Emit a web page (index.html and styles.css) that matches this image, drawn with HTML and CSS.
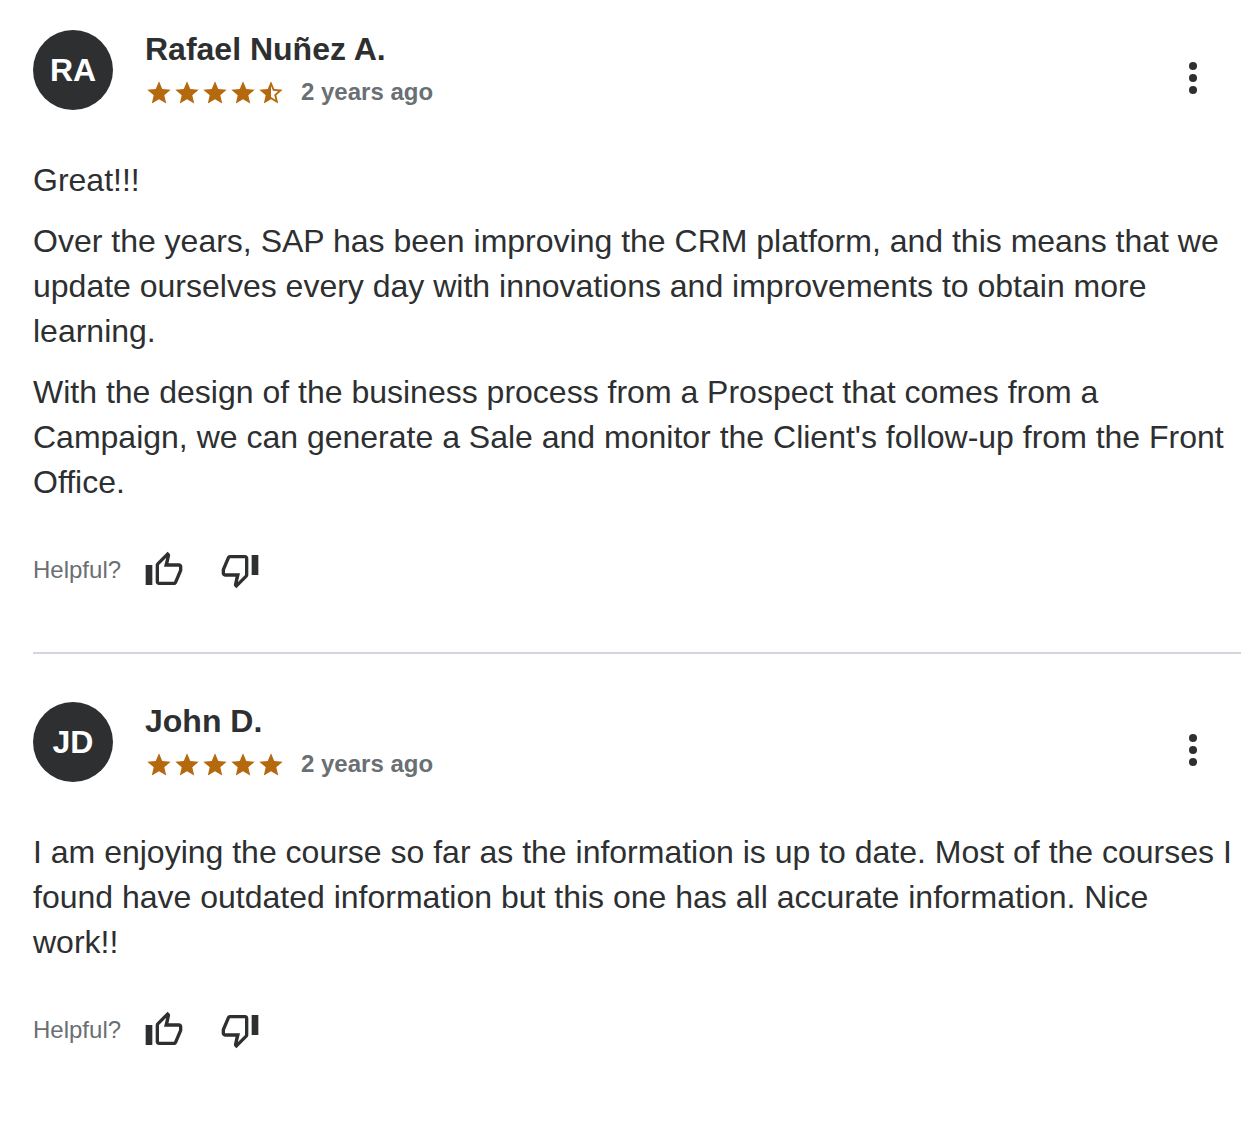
FILE: index.html
```html
<!DOCTYPE html>
<html lang="en">
<head>
    <meta charset="UTF-8">
    <meta name="viewport" content="width=device-width, initial-scale=1.0">
    <title>Course Reviews</title>
    <link rel="stylesheet" href="styles.css">
</head>
<body>
    <!-- Shared icons -->
    <svg class="sprite" aria-hidden="true">
        <symbol id="icon-star" viewBox="0 0 24 24">
            <path d="M12 17.27 18.18 21l-1.64-7.03L22 9.24l-7.19-.61L12 2 9.19 8.63 2 9.24l5.46 4.73L5.82 21z"/>
        </symbol>
        <symbol id="icon-star-half" viewBox="0 0 24 24">
            <path d="m22 9.24-7.19-.62L12 2 9.19 8.63 2 9.24l5.46 4.73L5.82 21 12 17.27 18.18 21l-1.63-7.03L22 9.24zM12 15.4V6.1l1.71 4.04 4.38.38-3.32 2.88 1 4.28L12 15.4z"/>
        </symbol>
        <symbol id="icon-more" viewBox="0 0 24 24">
            <circle cx="12" cy="6" r="2"/>
            <circle cx="12" cy="12" r="2"/>
            <circle cx="12" cy="18" r="2"/>
        </symbol>
        <symbol id="icon-like" viewBox="0 0 24 24">
            <path d="M9 21h9c.83 0 1.54-.5 1.84-1.22l3.02-7.05c.09-.23.14-.47.14-.73v-2c0-1.1-.9-2-2-2h-6.31l.95-4.57.03-.32c0-.41-.17-.79-.44-1.06L14.17 1 7.58 7.59C7.22 7.95 7 8.45 7 9v10c0 1.1.9 2 2 2zM9 9l4.34-4.34L12 10h9v2l-3 7H9V9zM1 9h4v12H1z"/>
        </symbol>
        <symbol id="icon-dislike" viewBox="0 0 24 24">
            <path d="M15 3H6c-.83 0-1.54.5-1.84 1.22l-3.02 7.05c-.09.23-.14.47-.14.73v2c0 1.1.9 2 2 2h6.31l-.95 4.57-.03.32c0 .41.17.79.44 1.06L9.83 23l6.59-6.59c.36-.36.58-.86.58-1.41V5c0-1.1-.9-2-2-2zm0 12-4.34 4.34L12 14H3v-2l3-7h9v10zm4-12h4v12h-4z"/>
        </symbol>
    </svg>

    <main class="reviews">
        <article class="review">
            <header class="review-header">
                <div class="avatar" aria-hidden="true">RA</div>
                <div class="review-info">
                    <h2 class="review-name">Rafael Nuñez A.</h2>
                    <div class="review-meta">
                        <div class="stars" role="img" aria-label="Rating: 4.5 out of 5">
                            <svg class="star"><use href="#icon-star"/></svg>
                            <svg class="star"><use href="#icon-star"/></svg>
                            <svg class="star"><use href="#icon-star"/></svg>
                            <svg class="star"><use href="#icon-star"/></svg>
                            <svg class="star"><use href="#icon-star-half"/></svg>
                        </div>
                        <span class="review-date">2 years ago</span>
                    </div>
                </div>
                <button type="button" class="menu-button" aria-label="Review options">
                    <svg class="menu-icon"><use href="#icon-more"/></svg>
                </button>
            </header>
            <div class="review-text">
                <p>Great!!!</p>
                <p>Over the years, SAP has been improving the CRM platform, and this means that we update ourselves every day with innovations and improvements to obtain more learning.</p>
                <p>With the design of the business process from a Prospect that comes from a Campaign, we can generate a Sale and monitor the Client's follow-up from the Front Office.</p>
            </div>
            <div class="feedback">
                <span class="feedback-label">Helpful?</span>
                <div class="feedback-buttons">
                    <button type="button" class="thumb-button" aria-label="Mark review as helpful">
                        <svg class="thumb-icon"><use href="#icon-like"/></svg>
                    </button>
                    <button type="button" class="thumb-button" aria-label="Mark review as unhelpful">
                        <svg class="thumb-icon"><use href="#icon-dislike"/></svg>
                    </button>
                </div>
            </div>
        </article>

        <article class="review">
            <header class="review-header">
                <div class="avatar" aria-hidden="true">JD</div>
                <div class="review-info">
                    <h2 class="review-name">John D.</h2>
                    <div class="review-meta">
                        <div class="stars" role="img" aria-label="Rating: 5 out of 5">
                            <svg class="star"><use href="#icon-star"/></svg>
                            <svg class="star"><use href="#icon-star"/></svg>
                            <svg class="star"><use href="#icon-star"/></svg>
                            <svg class="star"><use href="#icon-star"/></svg>
                            <svg class="star"><use href="#icon-star"/></svg>
                        </div>
                        <span class="review-date">2 years ago</span>
                    </div>
                </div>
                <button type="button" class="menu-button" aria-label="Review options">
                    <svg class="menu-icon"><use href="#icon-more"/></svg>
                </button>
            </header>
            <div class="review-text">
                <p>I am enjoying the course so far as the information is up to date. Most of the courses I found have outdated information but this one has all accurate information. Nice work!!</p>
            </div>
            <div class="feedback">
                <span class="feedback-label">Helpful?</span>
                <div class="feedback-buttons">
                    <button type="button" class="thumb-button" aria-label="Mark review as helpful">
                        <svg class="thumb-icon"><use href="#icon-like"/></svg>
                    </button>
                    <button type="button" class="thumb-button" aria-label="Mark review as unhelpful">
                        <svg class="thumb-icon"><use href="#icon-dislike"/></svg>
                    </button>
                </div>
            </div>
        </article>
    </main>
</body>
</html>
```

FILE: styles.css
```css
body {
    margin: 0;
    background-color: #fff;
    color: #2d2f31;
    font-family: "Liberation Sans", Arial, sans-serif;
    font-size: 32px;
    line-height: 45px;
}

svg {
    display: block;
    fill: currentColor;
}

.sprite {
    display: none;
}

.reviews {
    padding: 30px 13px 0 33px;
}

.review {
    padding-bottom: 62px;
}

/* Divider between two reviews */
.review + .review {
    border-top: 2px solid #d1d7dc;
    padding-top: 48px;
}

.review-header {
    display: flex;
    align-items: flex-start;
    margin-bottom: 32px;
}

.avatar {
    display: flex;
    align-items: center;
    justify-content: center;
    flex-shrink: 0;
    width: 80px;
    height: 80px;
    margin-right: 32px;
    border-radius: 50%;
    background-color: #2d2f31;
    color: #fff;
    font-weight: bold;
}

.review-info {
    flex: 1;
}

.review-name {
    margin: 0 0 8px;
    font-size: 32px;
    line-height: 38px;
}

.review-meta {
    display: flex;
    align-items: center;
    gap: 16px;
}

.stars {
    display: flex;
    padding-top: 2px;
    color: #b4690e;
}

.star {
    width: 28px;
    height: 28px;
}

.review-date {
    color: #6a6f73;
    font-size: 24px;
    font-weight: bold;
    line-height: 32px;
}

button {
    border: none;
    background: none;
    color: inherit;
    cursor: pointer;
}

.menu-button {
    padding: 24px;
}

.menu-icon {
    width: 48px;
    height: 48px;
}

.review-text p {
    margin: 0 0 16px;
}

.review-text p:last-child {
    margin-bottom: 0;
}

.feedback {
    display: flex;
    align-items: center;
    gap: 23px;
    margin-top: 45px;
}

.feedback-label {
    color: #6a6f73;
    font-size: 24px;
    line-height: 40px;
}

.feedback-buttons {
    display: flex;
    gap: 36px;
}

.thumb-button {
    padding: 0;
}

.thumb-icon {
    width: 40px;
    height: 40px;
}
```
